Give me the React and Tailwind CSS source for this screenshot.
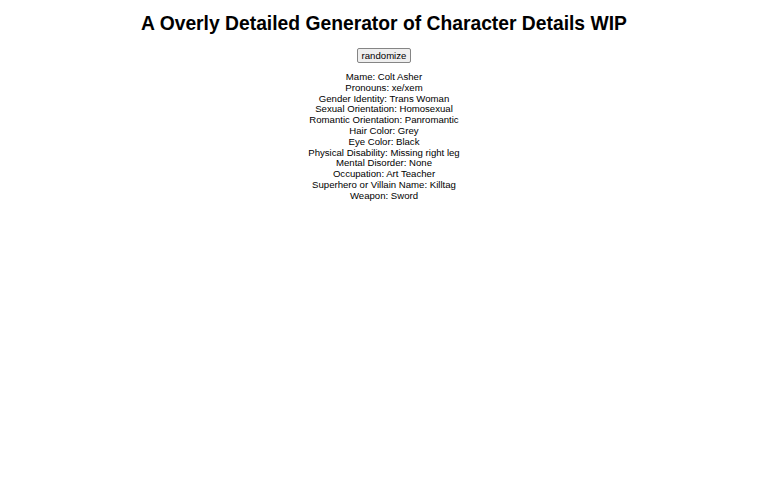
import { useState } from "react";

const details = [
  ["Mame", "Colt Asher"],
  ["Pronouns", "xe/xem"],
  ["Gender Identity", "Trans Woman"],
  ["Sexual Orientation", "Homosexual"],
  ["Romantic Orientation", "Panromantic"],
  ["Hair Color", "Grey"],
  ["Eye Color", "Black"],
  ["Physical Disability", "Missing right leg"],
  ["Mental Disorder", "None"],
  ["Occupation", "Art Teacher"],
  ["Superhero or Villain Name", "Killtag"],
  ["Weapon", "Sword"],
];

export default function App() {
  const [character] = useState(details);

  return (
    <div className="min-h-[480px] bg-white text-black font-['Liberation_Sans',Arial,sans-serif] text-center">
      <h1 className="pt-[12px] text-[19.3px] font-bold leading-[23px]">
        A Overly Detailed Generator of Character Details WIP
      </h1>

      <button className="mt-[13px] px-[4px] h-[15px] text-[9.6px] leading-[13px] bg-[#efefef] border border-[#858585] rounded-[2px]">
        randomize
      </button>

      <div className="mt-[6px] text-[9.6px] leading-[10.8px]">
        {character.map(([label, value]) => (
          <div key={label}>
            {label}: {value}
          </div>
        ))}
      </div>
    </div>
  );
}
